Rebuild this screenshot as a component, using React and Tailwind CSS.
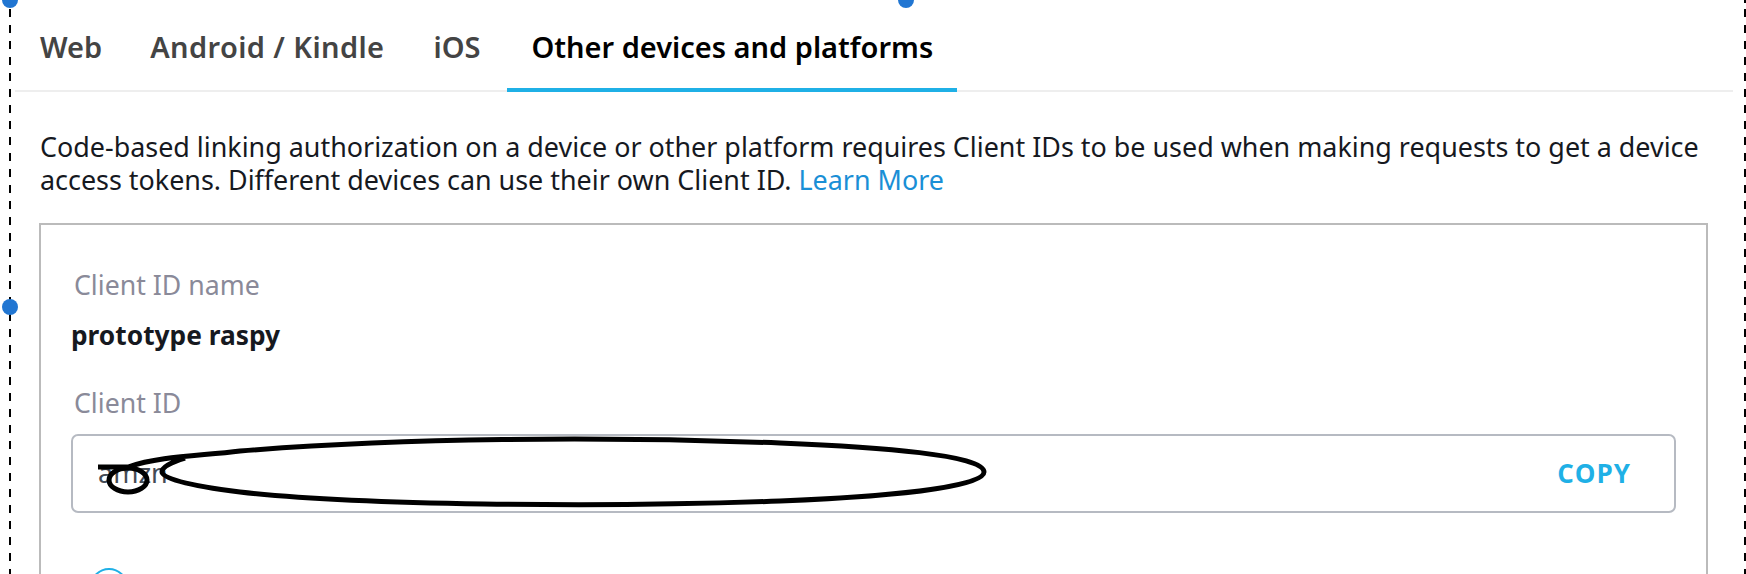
const font = "font-['Noto_Sans',sans-serif]"
const rail = "w-[2px] shrink-0 bg-[repeating-linear-gradient(to_bottom,#000_0px,#000_8px,transparent_8px,transparent_16px)] bg-[position:0_9px]"
const label = "pl-[3px] text-[26.7px] leading-[36px] text-[#8a8a99]"

const Dot = ({ className }) => (
  <span className={`absolute w-4 h-4 rounded-full bg-[#2176d2] ${className}`}></span>
)

// pen scribble that hides the client id
const Scribble = () => (
  <svg className="absolute left-0 top-0 w-full h-full pointer-events-none" viewBox="0 0 1746 574">
    <g fill="none" stroke="#000" strokeWidth="5">
      <path d="M98 467 H128 C160 456 200 456 240 451 C400 438 600 436 780 443 C880 447 984 455 984 472 C984 488 880 497 780 501 C600 508 350 505 240 492 C200 487 162 480 162 472 C162 467 172 462 185 458" />
      <ellipse cx="128" cy="480" rx="19" ry="12" />
    </g>
  </svg>
)

export default function App() {
  return (
    <div className={`relative flex w-[1746px] h-[574px] overflow-hidden bg-white ${font}`}>
      <div className={`ml-[9px] ${rail}`}></div>
      <div className="flex-1 min-w-0">
        <div className="flex h-[92px] ml-[4px] mr-[11px] border-b-2 border-[#eeeeee] pl-[25px] gap-[49px] text-[29px] font-semibold text-[#444444]">
          <div className="pt-[27px] leading-[40px]">Web</div>
          <div className="pt-[27px] -ml-px leading-[40px] tracking-[0.4px]">Android / Kindle</div>
          <div className="pt-[27px] leading-[40px]">iOS</div>
          <div className="h-[92px] -ml-[22px] px-[24px] pt-[27px] leading-[40px] text-black border-b-4 border-[#1fb0e6]">Other devices and platforms</div>
        </div>
        <p className="mt-[38px] ml-[29px] mr-[11px] text-[26.9px] leading-[33px] text-[#16191f]">
          Code-based linking authorization on a device or other platform requires Client IDs to be used when making requests to get a device access tokens. Different devices can use their own Client ID. <span className="text-[#1a8fd6]">Learn More</span>
        </p>
        <div className="mt-[27px] ml-[28px] mr-[36px] h-[400px] border-2 border-[#bbbbbb] px-[30px] pt-[42px]">
          <div className={label}>Client ID name</div>
          <div className="mt-[14px] text-[26.3px] leading-[36px] font-bold text-[#16191f]">prototype raspy</div>
          <div className={`mt-[32px] ${label}`}>Client ID</div>
          <div className="mt-[13px] flex items-center justify-between h-[79px] border-2 border-[#b6bac2] rounded-[7px] pl-[25px] pr-[43px]">
            <span className="text-[27px] text-[#444b55]">amzn</span>
            <span className="text-[26px] font-bold tracking-[1px] text-[#1fb0e6] font-['Open_Sans',sans-serif]">COPY</span>
          </div>
          <div className="mt-[55px] ml-[19px] w-[38px] h-[38px] rounded-full border-2 border-[#1fb0e6]"></div>
        </div>
      </div>
      <div className={rail}></div>
      <Dot className="left-[2px] -top-[8px]" />
      <Dot className="left-[898px] -top-[8px]" />
      <Dot className="left-[2px] top-[299px]" />
      <Scribble />
    </div>
  )
}
